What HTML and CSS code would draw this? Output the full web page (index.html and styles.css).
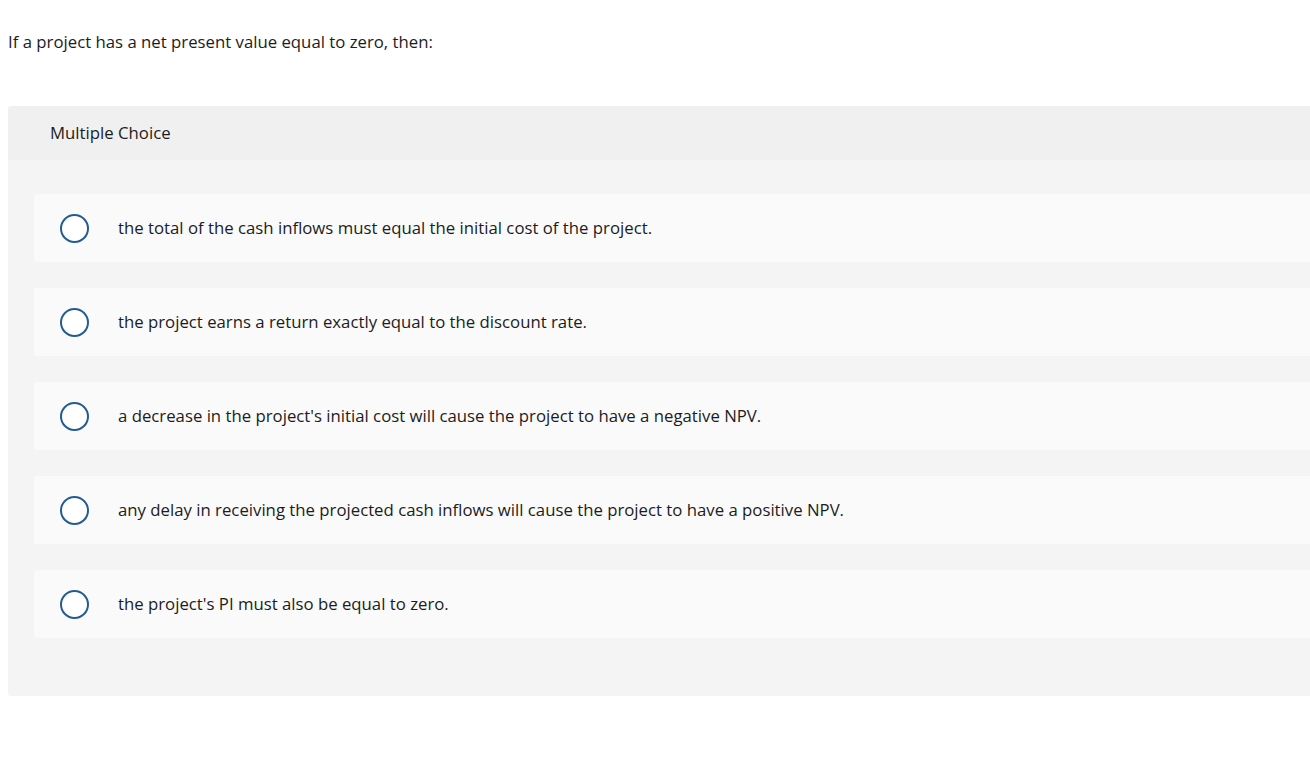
FILE: index.html
```html
<!DOCTYPE html>
<html>
<head>
<meta charset="utf-8">
<link rel="stylesheet" href="styles.css">
</head>
<body>
<p class="question">If a project has a net present value equal to zero, then:</p>
<div class="mc">
  <div class="mc-head">Multiple Choice</div>
  <div class="mc-body">
    <div class="opt"><span class="radio"></span><span class="opt-text">the total of the cash inflows must equal the initial cost of the project.</span></div>
    <div class="opt"><span class="radio"></span><span class="opt-text">the project earns a return exactly equal to the discount rate.</span></div>
    <div class="opt"><span class="radio"></span><span class="opt-text">a decrease in the project's initial cost will cause the project to have a negative NPV.</span></div>
    <div class="opt"><span class="radio"></span><span class="opt-text">any delay in receiving the projected cash inflows will cause the project to have a positive NPV.</span></div>
    <div class="opt"><span class="radio"></span><span class="opt-text">the project's PI must also be equal to zero.</span></div>
  </div>
</div>
</body>
</html>
```

FILE: styles.css
```css
html, body { background: #fff; }
body {
  margin: 0 0 0 8px;
  font-family: "Open Sans", Lato, sans-serif;
  font-size: 16.75px;
  color: #1c1c1c;
  overflow: hidden;
}
.question {
  margin: 32px 0 0 0;
  line-height: 20px;
  height: 20px;
}
.mc {
  margin-top: 54px;
  border-radius: 3px 0 0 3px;
  overflow: hidden;
}
.mc-head {
  background: #f0f0f0;
  height: 52px;
  padding: 0 0 2px 42px;
  display: flex;
  align-items: center;
}
.mc-body {
  background: #f4f4f4;
  padding: 34px 0 58px 26px;
  display: flex;
  flex-direction: column;
  gap: 26px;
}
.opt {
  background: #fafafa;
  height: 68px;
  border-radius: 3px 0 0 3px;
  display: flex;
  align-items: center;
  padding-left: 26px;
}
.radio {
  width: 25px;
  height: 25px;
  border: 2px solid #245c92;
  border-radius: 50%;
  background: #fff;
  flex: none;
  margin-top: 1px;
}
.opt-text {
  margin-left: 29px;
  line-height: 20px;
  padding-bottom: 1px;
}
```
